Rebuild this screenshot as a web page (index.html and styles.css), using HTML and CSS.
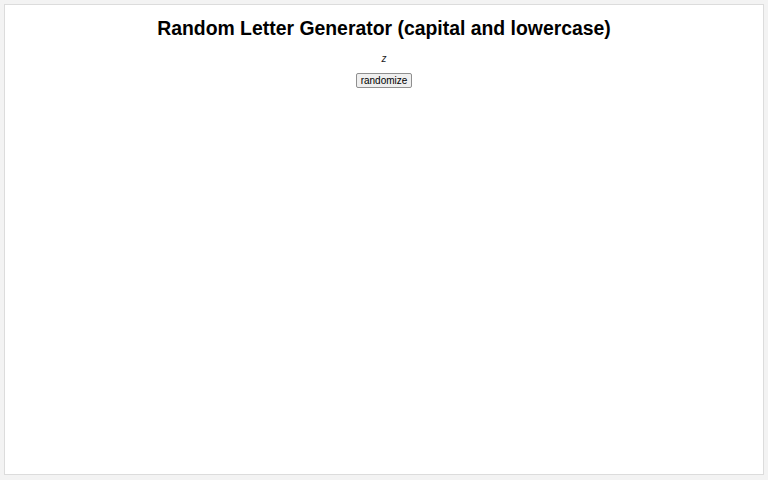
FILE: index.html
```html
<!DOCTYPE html>
<html lang="en">
<head>
    <meta charset="UTF-8">
    <meta name="viewport" content="width=device-width, initial-scale=1.0">
    <title>Random Letter Generator</title>
    <link rel="stylesheet" href="styles.css">
</head>
<body>

<div class="page">
    <h1>Random Letter Generator (capital and lowercase)</h1>
    <p class="letter" id="letter">z</p>
    <button onclick="randomize()">randomize</button>
</div>

<script>
    const letters = 'ABCDEFGHIJKLMNOPQRSTUVWXYZabcdefghijklmnopqrstuvwxyz';

    function randomize() {
        const pick = letters[Math.floor(Math.random() * letters.length)];
        document.getElementById('letter').innerText = pick;
    }
</script>

</body>
</html>
```

FILE: styles.css
```css
html, body {
    height: 100%;
}
body {
    font-family: 'Liberation Sans', Arial, sans-serif;
    background-color: #f3f3f3;
    margin: 0;
    padding: 4px 4px 5px 4px;
    box-sizing: border-box;
}
.page {
    background-color: #ffffff;
    border: 1px solid #dcdcdc;
    height: 100%;
    box-sizing: border-box;
    text-align: center;
    padding-top: 12px;
}
.page h1 {
    margin: 0;
    font-size: 19.4px;
    font-weight: bold;
    color: #000000;
}
.page .letter {
    margin: 13px 0 6px;
    font-size: 10px;
    font-style: italic;
    color: #222222;
}
.page button {
    font-family: 'Liberation Sans', Arial, sans-serif;
    font-size: 10px;
    padding: 1px 4px;
    border: 1px solid #8f8f8f;
    border-radius: 2px;
    background-color: #efefef;
    color: #000000;
}
```
